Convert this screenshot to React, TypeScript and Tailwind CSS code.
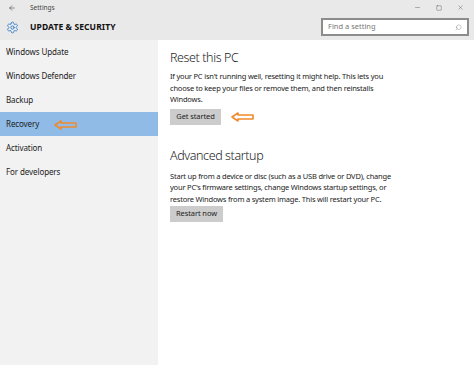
import { Settings, ArrowLeft, Search, Minus, Square, X } from "lucide-react";

const items = ["Windows Update", "Windows Defender", "Backup", "Recovery", "Activation", "For developers"];

function OrangeArrow() {
  return (
    <svg width="24" height="10" viewBox="0 0 24 10" className="shrink-0">
      <path d="M1 5 L7 1 L7 3 L22 3 L22 7 L7 7 L7 9 Z" fill="none" stroke="#f08a2c" strokeWidth="1.6" strokeLinejoin="round" />
    </svg>
  );
}

export default function App() {
  return (
    <div className="w-[474px] h-[368px] flex flex-col bg-white text-[#222] font-['Noto_Sans',sans-serif] overflow-hidden">
      {/* title + header */}
      <div className="bg-[#e9e9e9] h-[40px] flex flex-col">
        <div className="h-[15px] flex items-center">
          <ArrowLeft size={8} strokeWidth={1.5} className="ml-[8px] text-[#333]" />
          <span className="ml-[14px] text-[6.5px] text-[#444]">Settings</span>
          <div className="ml-auto flex items-center gap-[15px] mr-[10px] text-[#444]">
            <Minus size={7} strokeWidth={1.3} />
            <Square size={6} strokeWidth={1.5} />
            <X size={7} strokeWidth={1.3} />
          </div>
        </div>
        <div className="flex items-center h-[24px]">
          <Settings size={13} strokeWidth={1.6} className="ml-[6px] text-[#2b78c8]" />
          <span className="ml-[11px] text-[8.5px] font-bold tracking-[0.1px] text-[#111]">UPDATE &amp; SECURITY</span>
          <div className="ml-auto mr-[5px] w-[148px] h-[18px] border-2 border-[#8c8c8c] bg-white flex items-center px-[5px]">
            <span className="text-[7.5px] text-[#777]">Find a setting</span>
            <Search size={7} strokeWidth={1.5} className="ml-auto text-[#888] scale-x-[-1]" />
          </div>
        </div>
      </div>
      <div className="flex flex-1">
        {/* sidebar */}
        <div className="w-[158px] bg-[#f2f2f2] flex flex-col mb-[3px]">
          {items.map((it) => (
            <div
              key={it}
              className={`h-[24px] flex items-center pl-[6px] text-[8px] tracking-[-0.1px] ${it === "Recovery" ? "bg-[#8fbbe6]" : ""}`}
            >
              <span>{it}</span>
              {it === "Recovery" && (
                <span className="ml-[15px] mt-[1px]">
                  <OrangeArrow />
                </span>
              )}
            </div>
          ))}
        </div>
        {/* content */}
        <div className="flex-1 pl-[12px] pt-[9px] flex flex-col">
          <h1 className="text-[12.5px] font-light tracking-[-0.4px] text-[#222] leading-[18px]">Reset this PC</h1>
          <p className="mt-[4px] whitespace-nowrap text-[7.5px] tracking-[-0.2px] leading-[11.5px] text-[#222]">
            If your PC isn't running well, resetting it might help. This lets you
            <br />
            choose to keep your files or remove them, and then reinstalls
            <br />
            Windows.
          </p>
          <div className="mt-[3px] flex items-center">
            <div className="w-[51px] h-[16px] bg-[#cccccc] flex items-center justify-center text-[7.5px] tracking-[-0.1px]">Get started</div>
            <span className="ml-[10px]">
              <OrangeArrow />
            </span>
          </div>
          <h1 className="mt-[22px] text-[12.5px] font-light tracking-[-0.4px] text-[#222] leading-[18px]">Advanced startup</h1>
          <p className="mt-[6px] whitespace-nowrap text-[7.5px] tracking-[-0.2px] leading-[11.5px] text-[#222]">
            Start up from a device or disc (such as a USB drive or DVD), change
            <br />
            your PC's firmware settings, change Windows startup settings, or
            <br />
            restore Windows from a system image. This will restart your PC.
          </p>
          <div className="mt-[1px] w-[53px] h-[16px] bg-[#cccccc] flex items-center justify-center text-[7.5px] tracking-[-0.1px]">Restart now</div>
        </div>
      </div>
    </div>
  );
}
